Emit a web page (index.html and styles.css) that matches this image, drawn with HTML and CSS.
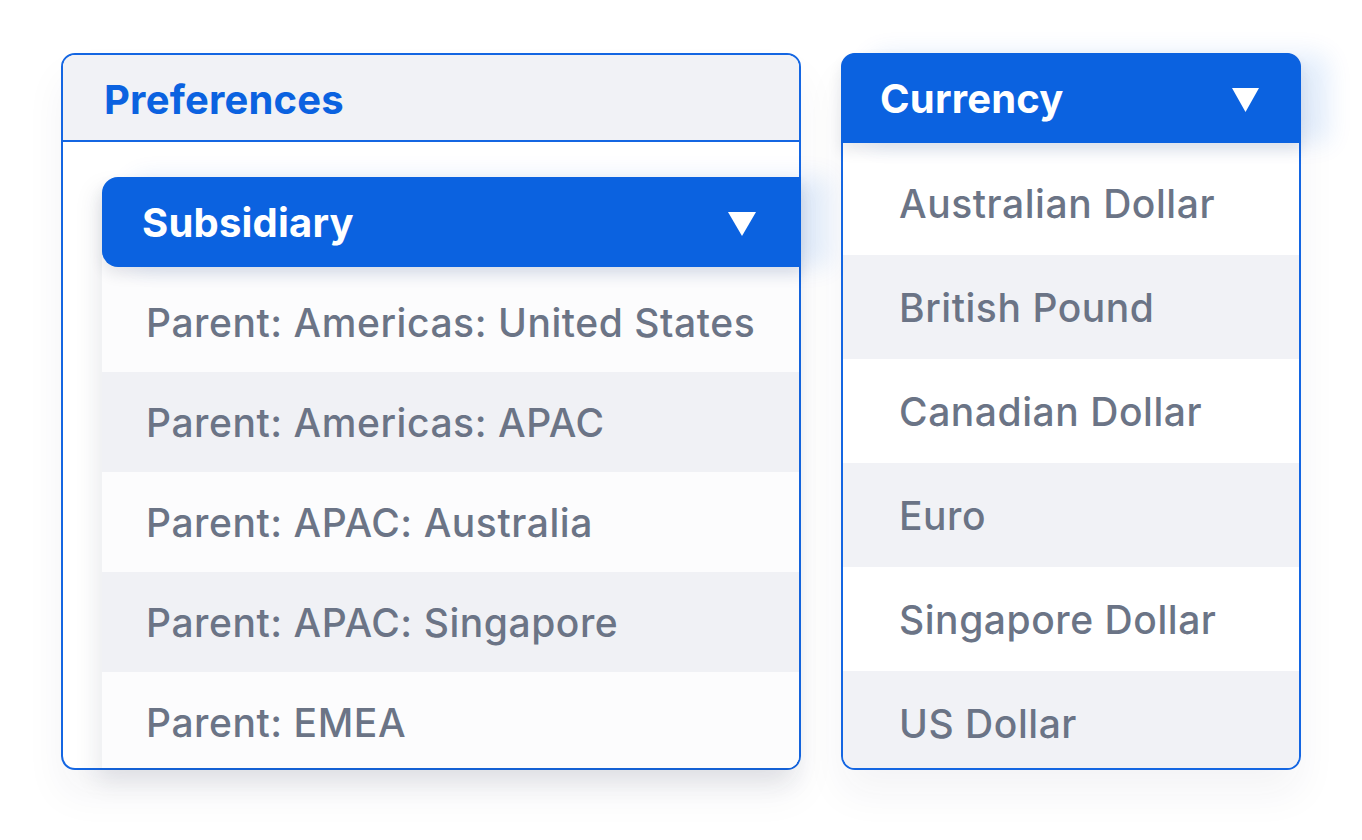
FILE: index.html
```html
<!DOCTYPE html>
<html>
<head>
<meta charset="utf-8">
<link rel="stylesheet" href="styles.css">
</head>
<body>
<div class="stage">
  <section class="card prefs">
    <header class="card-head">Preferences</header>
    <div class="card-body">
      <div class="panel">
        <div class="dd-head dd-sub">
          <span>Subsidiary</span>
          <svg class="caret" width="28" height="24" viewBox="0 0 28 24"><path d="M0 0H28L14 24Z" fill="#fff"/></svg>
        </div>
        <ul class="list sub-list">
          <li>Parent: Americas: United States</li>
          <li>Parent: Americas: APAC</li>
          <li>Parent: APAC: Australia</li>
          <li>Parent: APAC: Singapore</li>
          <li>Parent: EMEA</li>
        </ul>
      </div>
    </div>
  </section>
  <section class="card currency">
    <div class="dd-head dd-cur">
      <span>Currency</span>
      <svg class="caret" width="27" height="24" viewBox="0 0 27 24"><path d="M0 0H27L13.5 24Z" fill="#fff"/></svg>
    </div>
    <ul class="list cur-list">
      <li>Australian Dollar</li>
      <li>British Pound</li>
      <li>Canadian Dollar</li>
      <li>Euro</li>
      <li>Singapore Dollar</li>
      <li>US Dollar</li>
    </ul>
  </section>
</div>
</body>
</html>
```

FILE: styles.css
```css
* { box-sizing: border-box; }
html, body { margin: 0; padding: 0; background: #fff; }
body {
  width: 1362px;
  height: 840px;
  overflow: hidden;
  font-family: Inter, "Noto Sans", sans-serif;
}
.stage {
  display: flex;
  gap: 40px;
  padding: 53px 0 0 61px;
}
.card {
  height: 717px;
  border: 2px solid #1466e2;
  border-radius: 14px;
  background: #fff;
  display: flex;
  flex-direction: column;
  box-shadow: 0 24px 40px rgba(30, 40, 70, 0.05);
}
.prefs { width: 740px; }
.currency { width: 460px; }

.card-head {
  height: 87px;
  flex: none;
  background: #f1f2f6;
  border-bottom: 2px solid #1466e2;
  border-radius: 12px 12px 0 0;
  display: flex;
  align-items: center;
  padding: 4px 0 0 41px;
  color: #0b62e0;
  font-weight: 700;
  font-size: 40px;
  letter-spacing: 0.2px;
}
.card-body {
  flex: 1;
  min-height: 0;
  display: flex;
  padding: 35px 0 0 39px;
}
.panel {
  flex: 1;
  display: flex;
  flex-direction: column;
  background: #fcfcfd;
  border-bottom-right-radius: 12px;
  box-shadow: -4px 14px 24px rgba(30, 40, 70, 0.10);
}
.dd-head {
  flex: none;
  height: 90px;
  background: #0b62e0;
  color: #fff;
  font-weight: 700;
  font-size: 40px;
  letter-spacing: 0.2px;
  display: flex;
  align-items: center;
  justify-content: space-between;
  position: relative;
  z-index: 1;
  box-shadow: 28px 0 24px rgba(11, 98, 224, 0.11), 0 8px 14px rgba(30, 40, 70, 0.10);
}
.dd-sub {
  border-radius: 16px 0 0 16px;
  padding: 0 45px 0 40px;
  margin-right: -2px;
}
.dd-cur {
  margin: -2px -2px 0 -2px;
  border-radius: 16px 16px 0 0;
  padding: 0 42px 0 39px;
}
.caret { display: block; flex: none; }
.dd-sub .caret { margin-top: 4px; }
.dd-cur .caret { margin-top: 4px; }

.list {
  list-style: none;
  margin: 0;
  padding: 0;
  color: #6b7486;
  font-size: 39px;
  font-weight: 500;
  letter-spacing: 0.55px;
}
.sub-list {
  flex: 1;
  min-height: 0;
  margin-top: 5px;
  overflow: hidden;
  border-bottom-right-radius: 12px;
}
.sub-list li {
  flex: none;
  height: 100px;
  display: flex;
  align-items: center;
  padding-left: 44px;
  background: #fcfcfd;
}
.sub-list li:nth-child(even) { background: #f0f1f5; }

.cur-list {
  flex: 1;
  min-height: 0;
  padding-top: 8px;
  overflow: hidden;
  border-radius: 0 0 12px 12px;
}
.cur-list li {
  height: 104px;
  display: flex;
  align-items: center;
  padding-left: 56px;
  background: #fff;
}
.cur-list li:nth-child(even) { background: #f1f2f6; }
```
